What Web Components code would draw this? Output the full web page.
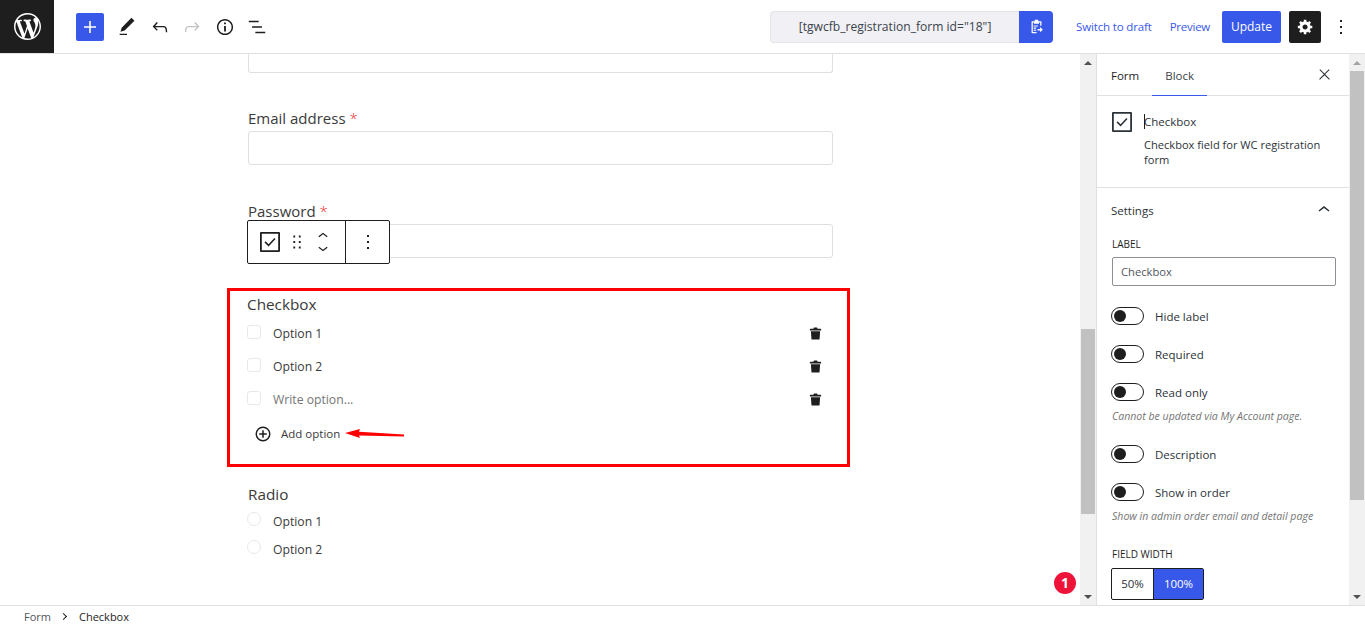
<!DOCTYPE html>
<html>
<head>
<meta charset="utf-8">
<title>Edit Form</title>
<style>
  html, body { margin: 0; height: 100%; overflow: hidden; }
  body { font-family: "Open Sans", "Noto Sans", sans-serif; color: #1e1e1e; background: #fff; }
</style>
</head>
<body>
<wp-editor></wp-editor>
<script>
const ICONS = {
  wp: ['0 0 20 20', 'M20 10c0-5.51-4.49-10-10-10C4.48 0 0 4.49 0 10c0 5.52 4.48 10 10 10 5.51 0 10-4.48 10-10zM7.78 15.37L4.37 6.22c.55-.02 1.17-.08 1.17-.08.5-.06.44-1.13-.06-1.11 0 0-1.45.11-2.37.11-.18 0-.37 0-.58-.01C4.12 2.69 6.87 1.11 10 1.11c2.33 0 4.45.87 6.05 2.34-.68-.11-1.65.39-1.65 1.58 0 .74.45 1.36.9 2.1.35.61.55 1.36.55 2.46 0 1.49-1.4 5-1.4 5l-3.03-8.37c.54-.02.82-.17.82-.17.5-.05.44-1.25-.06-1.22 0 0-1.44.12-2.38.12-.87 0-2.33-.12-2.33-.12-.5-.03-.56 1.2-.06 1.22l.92.08 1.26 3.41zM17.41 10c.24-.64.74-1.87.43-4.25.7 1.29 1.05 2.71 1.05 4.25 0 3.29-1.73 6.24-4.4 7.78.97-2.59 1.94-5.2 2.92-7.78zM6.1 18.09C3.12 16.65 1.11 13.53 1.11 10c0-1.3.23-2.48.72-3.59C3.25 10.3 4.67 14.2 6.1 18.09zm4.03-6.63l2.58 6.98c-.86.29-1.76.45-2.71.45-.79 0-1.57-.11-2.29-.33.81-2.38 1.62-4.74 2.42-7.1z'],
  plus: ['0 0 24 24', 'M18 11.2h-5.2V6h-1.6v5.2H6v1.6h5.2V18h1.6v-5.2H18z'],
  pen: ['0 0 24 24', 'M20.1 5.1L16.9 2 6.2 12.7l-1.3 4.4 4.5-1.3L20.1 5.1zM4 20.8h8v-1.5H4v1.5z'],
  undo: ['0 0 24 24', 'M18.3 11.7c-.6-.6-1.4-.9-2.3-.9H6.7l2.9-3.3-1.1-1-4.5 5L8.5 16l1-1-2.7-2.7H16c.5 0 .9.2 1.3.5 1 1 1 3.4 1 4.5v.3h1.5v-.2c0-1.5 0-4.3-1.5-5.7z'],
  redo: ['0 0 24 24', 'M15.6 6.5l-1.1 1 2.9 3.3H8c-.9 0-1.7.3-2.3.9-1.4 1.5-1.4 4.2-1.4 5.6v.2h1.5v-.3c0-1.1 0-3.5 1-4.5.3-.3.7-.5 1.3-.5h9.2L14.5 15l1.1 1.1 4.6-4.6-4.6-5z'],
  info: ['0 0 24 24', 'M12 3.2c-4.8 0-8.8 3.9-8.8 8.8 0 4.8 3.9 8.8 8.8 8.8 4.8 0 8.8-3.9 8.8-8.8 0-4.8-4-8.8-8.8-8.8zm0 16c-4 0-7.2-3.3-7.2-7.2C4.8 8 8 4.8 12 4.8s7.2 3.3 7.2 7.2c0 4-3.2 7.2-7.2 7.2zM11 17h2v-6h-2v6zm0-8h2V7h-2v2z'],
  list: ['0 0 24 24', 'M13.8 5.2H3v1.5h10.8V5.2zm-3.6 12v1.5H21v-1.5H10.2zm7.2-6H6.6v1.5h10.8v-1.5z'],
  cog: ['0 0 20 20', 'M18 12h-2.18c-.17.7-.44 1.35-.81 1.93l1.54 1.54-2.1 2.1-1.54-1.54c-.58.36-1.23.63-1.91.79V19H8v-2.18c-.68-.16-1.33-.43-1.91-.79l-1.54 1.54-2.12-2.12 1.54-1.54c-.36-.58-.63-1.23-.79-1.91H1V9.03h2.17c.16-.7.44-1.35.8-1.94L2.43 5.55l2.1-2.1 1.54 1.54c.58-.37 1.24-.64 1.93-.81V2h3v2.18c.68.16 1.33.43 1.91.79l1.54-1.54 2.12 2.12-1.54 1.54c.36.59.64 1.24.8 1.94H18V12zm-8.5 1.5c1.66 0 3-1.34 3-3s-1.34-3-3-3-3 1.34-3 3 1.34 3 3 3z'],
  more: ['0 0 24 24', 'M13 19h-2v-2h2v2zm0-6h-2v-2h2v2zm0-6h-2V5h2v2z'],
  close: ['0 0 24 24', 'M13 11.8l6.1-6.3-1-1-6.1 6.2-6.1-6.2-1 1 6.1 6.3-6.5 6.7 1 1 6.5-6.6 6.5 6.6 1-1z'],
  up: ['0 0 24 24', 'M6.5 12.4L12 8l5.5 4.4-.9 1.2L12 10l-4.5 3.6-1-1.2z'],
  down: ['0 0 24 24', 'M17.5 11.6L12 16l-5.5-4.4.9-1.2L12 14l4.5-3.6 1 1.2z'],
  drag: ['0 0 24 24', 'M8 7h2V5H8v2zm0 6h2v-2H8v2zm0 6h2v-2H8v2zm6-14v2h2V5h-2zm0 8h2v-2h-2v2zm0 6h2v-2h-2v2z'],
  trash: ['0 0 24 24', 'M9.5 2.5h5l.8 1.7H20a1 1 0 0 1 1 1V7H3V5.2a1 1 0 0 1 1-1h4.7zM4.6 8.2h14.8l-1 13.3H5.6z'],
  plusc: ['0 0 24 24', 'M12 2a10 10 0 1 0 0 20 10 10 0 0 0 0-20zm0 1.9a8.1 8.1 0 1 1 0 16.2 8.1 8.1 0 0 1 0-16.2zM11 7h2v4h4v2h-4v4h-2v-4H7v-2h4z'],
  check: ['0 0 24 24', 'M3 2h18a1 1 0 0 1 1 1v18a1 1 0 0 1-1 1H3a1 1 0 0 1-1-1V3a1 1 0 0 1 1-1zm.8 1.8v16.4h16.4V3.8zM10.6 16.4l-4.1-4 1.1-1.1 3 2.9 5.8-6.3 1.1 1z'],
  clip: ['0 0 24 24', 'M9.5 2.5h5v2H18a1 1 0 0 1 1 1V11h-1.8V6.3h-1.7V8h-7V6.3H6.8v13.4H12v1.8H6a1 1 0 0 1-1-1V5.5a1 1 0 0 1 1-1h3.5zM8 10.5h6V12H8zm0 3h3.5V15H8zm0 3h3.5V18H8zM17 12.8l4 3.7-4 3.7v-2.7h-3.6v-2H17z']
};

class WpIcon extends HTMLElement {
  connectedCallback() {
    const [box, d] = ICONS[this.getAttribute('name')];
    const size = this.getAttribute('size') || 24;
    this.attachShadow({ mode: 'open' }).innerHTML = `
      <style>:host{display:inline-flex;flex:none;width:${size}px;height:${size}px}svg{display:block;fill:currentColor}</style>
      <svg width="${size}" height="${size}" viewBox="${box}"><path fill-rule="evenodd" d="${d}"/></svg>`;
  }
}
customElements.define('wp-icon', WpIcon);

const topbarTemplate = document.createElement('template');
topbarTemplate.innerHTML = `
<style>
  :host { display: flex; align-items: center; height: 53px; border-bottom: 1px solid #e0e0e0; background: #fff; flex: none; }
  .logo { width: 54px; height: 53px; background: #1e1e1e; color: #fff; display: flex; align-items: center; justify-content: center; }
  .add { width: 28px; height: 28px; margin: 0 12px 0 22px; background: #3858e9; color: #fff; border-radius: 2px; display: flex; align-items: center; justify-content: center; }
  .tool { margin-right: 10.5px; }
  .tool.off { color: #c4c4c4; }
  .tools { display: flex; align-items: center; }
  .short { margin-left: auto; display: flex; height: 32px; width: 283px; }
  .code { flex: 1; background: #f0f0f5; border: 1px solid #e4e4e9; border-right: 0; border-radius: 4px 0 0 4px; box-sizing: border-box; font-size: 12.1px; line-height: 30px; text-align: center; color: #3c434a; white-space: nowrap; }
  .copy { width: 34px; background: #3858e9; color: #fff; border-radius: 0 4px 4px 0; display: flex; align-items: center; justify-content: center; }
  a { color: #3858e9; font-size: 11.5px; text-decoration: none; white-space: nowrap; letter-spacing: -.15px; }
  .draft { margin-left: 23px; }
  .preview { margin-left: 18px; letter-spacing: -.25px; }
  .update { margin-left: 12px; height: 32px; width: 59px; background: #3858e9; color: #fff; border-radius: 2px; font-size: 12px; font-weight: 500; line-height: 32px; text-align: center; }
  .cog { margin-left: 8px; width: 32px; height: 32px; background: #1e1e1e; color: #fff; border-radius: 2px; display: flex; align-items: center; justify-content: center; }
  .dots { margin: 0 12px 0 8px; }
</style>
<div class="logo"><wp-icon name="wp" size="27"></wp-icon></div>
<div class="add"><wp-icon name="plus"></wp-icon></div>
<div class="tools">
  <wp-icon class="tool" name="pen" size="22"></wp-icon>
  <wp-icon class="tool" name="undo" size="22"></wp-icon>
  <wp-icon class="tool off" name="redo" size="22"></wp-icon>
  <wp-icon class="tool" name="info" size="22"></wp-icon>
  <wp-icon class="tool" name="list" size="22"></wp-icon>
</div>
<div class="short">
  <div class="code">[tgwcfb_registration_form id="18"]</div>
  <div class="copy"><wp-icon name="clip" size="17"></wp-icon></div>
</div>
<a class="draft">Switch to draft</a>
<a class="preview">Preview</a>
<div class="update">Update</div>
<div class="cog"><wp-icon name="cog" size="17"></wp-icon></div>
<wp-icon class="dots" name="more"></wp-icon>
`;
class WpTopbar extends HTMLElement {
  constructor() {
    super();
    this.attachShadow({ mode: 'open' }).appendChild(topbarTemplate.content.cloneNode(true));
  }
}
customElements.define('wp-topbar', WpTopbar);

class WpScrollbar extends HTMLElement {
  connectedCallback() {
    const top = this.getAttribute('top');
    const height = this.getAttribute('thumb');
    const up = this.getAttribute('pale') !== null ? '#a3a3a3' : '#505050';
    this.attachShadow({ mode: 'open' }).innerHTML = `
      <style>
        :host { display: flex; flex-direction: column; align-items: center; background: #f1f1f1; flex: none; height: 100%; position: relative; }
        .btn { height: 17px; flex: none; display: flex; align-items: center; justify-content: center; }
        .a { width: 0; height: 0; border-left: 4px solid transparent; border-right: 4px solid transparent; }
        .u { border-bottom: 4px solid ${up}; }
        .d { border-top: 4px solid #505050; }
        .track { flex: 1; width: 100%; box-sizing: border-box; padding: 0 1px; }
        .thumb { height: ${height}px; margin-top: ${top}px; background: #c1c1c1; }
      </style>
      <div class="btn"><div class="a u"></div></div>
      <div class="track"><div class="thumb"></div></div>
      <div class="btn"><div class="a d"></div></div>`;
  }
}
customElements.define('wp-scrollbar', WpScrollbar);

const fieldTemplate = document.createElement('template');
fieldTemplate.innerHTML = `
<style>
  :host { display: block; }
  .label { font-size: 15px; line-height: 20px; color: #3a3a3a; height: 20px; margin-bottom: 3px; white-space: nowrap; }
  .req { color: #ee2a2a; font-weight: 300; }
  .input { height: 32px; border: 1px solid #dfdfe3; border-radius: 3px; background: #fff; }
</style>
<div class="label"><slot></slot> <span class="req">*</span></div>
<div class="input"></div>
`;
class WpField extends HTMLElement {
  constructor() {
    super();
    this.attachShadow({ mode: 'open' }).appendChild(fieldTemplate.content.cloneNode(true));
  }
}
customElements.define('wp-field', WpField);

class WpOption extends HTMLElement {
  connectedCallback() {
    const radio = this.hasAttribute('radio');
    const trash = this.hasAttribute('trash');
    const ph = this.hasAttribute('placeholder');
    this.attachShadow({ mode: 'open' }).innerHTML = `
      <style>
        :host { display: flex; align-items: center; font-size: 12.2px; color: ${ph ? '#757575' : '#3a3a3a'}; }
        .box { width: 12px; height: 12px; border: 1px solid #e8e8ea; border-radius: ${radio ? '50%' : '3px'}; margin: -4px 12px 0 -1px; flex: none; background: #fff; }
        .t { flex: 1; }
        wp-icon { color: #1e1e1e; margin-right: 10px; }
      </style>
      <div class="box"></div><div class="t"><slot></slot></div>
      ${trash ? '<wp-icon name="trash" size="15"></wp-icon>' : ''}`;
  }
}
customElements.define('wp-option', WpOption);

const toolbarTemplate = document.createElement('template');
toolbarTemplate.innerHTML = `
<style>
  :host { display: flex; position: absolute; left: 247px; top: 166px; width: 143px; height: 44px; box-sizing: border-box; border: 1px solid #1e1e1e; border-radius: 2px; background: #fff; z-index: 2; }
  .l { width: 98px; border-right: 1px solid #1e1e1e; display: flex; align-items: center; padding-left: 9.5px; box-sizing: border-box; }
  .mv { display: flex; flex-direction: column; margin-left: 5.5px; }
  .mv wp-icon + wp-icon { margin-top: -7.5px; }
  .r { flex: 1; display: flex; align-items: center; justify-content: center; }
</style>
<div class="l">
  <wp-icon name="check" size="24"></wp-icon>
  <wp-icon name="drag" size="22" style="margin-left:4px"></wp-icon>
  <div class="mv"><wp-icon name="up" size="20"></wp-icon><wp-icon name="down" size="20"></wp-icon></div>
</div>
<div class="r"><wp-icon name="more" size="24"></wp-icon></div>
`;
class WpBlockToolbar extends HTMLElement {
  constructor() {
    super();
    this.attachShadow({ mode: 'open' }).appendChild(toolbarTemplate.content.cloneNode(true));
  }
}
customElements.define('wp-block-toolbar', WpBlockToolbar);

const canvasTemplate = document.createElement('template');
canvasTemplate.innerHTML = `
<style>
  :host { display: block; flex: 1; position: relative; overflow: hidden; background: #fff; height: 100%; }
  .col { width: 585px; margin-left: 248px; }
  .stub { height: 19px; box-sizing: border-box; border: 1px solid #dfdfe3; border-top: 0; border-radius: 0 0 3px 3px; }
  wp-field { margin-top: 35px; }
  wp-field + wp-field { margin-top: 36px; }
  h3 { margin: 0; font-weight: 400; font-size: 15.3px; line-height: 20px; color: #3a3a3a; }
  .check { margin-top: 36px; }
  .check wp-option { height: 33px; }
  .check h3 { margin-bottom: 3px; margin-left: -1px; }
  .add { display: flex; align-items: center; height: 33px; margin: 1px 0 0 6px; font-size: 11.5px; color: #3a3a3a; }
  .add wp-icon { margin-right: 9px; color: #1e1e1e; }
  .radio { margin-top: 34px; }
  .radio h3 { margin-bottom: 3px; }
  .radio wp-option { height: 28px; }
  .mark { position: absolute; left: 227px; top: 234px; width: 623px; height: 179px; box-sizing: border-box; border: 3px solid #ff0000; pointer-events: none; }
  .arrow { position: absolute; left: 345px; top: 372px; }
  .badge { position: absolute; left: 1054px; top: 518px; width: 22px; height: 22px; border-radius: 50%; background: #ee1339; color: #fff; font: 700 14px/22px "Open Sans", sans-serif; text-align: center; }
</style>
<div class="col">
  <div class="stub"></div>
  <wp-field>Email address</wp-field>
  <wp-field>Password</wp-field>
  <div class="check">
    <h3>Checkbox</h3>
    <wp-option trash>Option 1</wp-option>
    <wp-option trash>Option 2</wp-option>
    <wp-option trash placeholder>Write option...</wp-option>
    <div class="add"><wp-icon name="plusc" size="18"></wp-icon>Add option</div>
  </div>
  <div class="radio">
    <h3>Radio</h3>
    <wp-option radio>Option 1</wp-option>
    <wp-option radio>Option 2</wp-option>
  </div>
</div>
<wp-block-toolbar></wp-block-toolbar>
<div class="mark"></div>
<svg class="arrow" width="60" height="14" viewBox="0 0 60 14"><path fill="#ff0000" d="M0 7 L15 3 L14 5.8 L59 8.6 L59 10.6 L14 9.4 L15 12 Z"/></svg>
<div class="badge">1</div>
`;
class WpCanvas extends HTMLElement {
  constructor() {
    super();
    this.attachShadow({ mode: 'open' }).appendChild(canvasTemplate.content.cloneNode(true));
  }
}
customElements.define('wp-canvas', WpCanvas);

class WpToggle extends HTMLElement {
  connectedCallback() {
    const hint = this.getAttribute('hint');
    this.attachShadow({ mode: 'open' }).innerHTML = `
      <style>
        :host { display: block; margin-bottom: 20px; }
        .row { display: flex; align-items: center; height: 18px; font-size: 11.5px; color: #2c3338; }
        .sw { width: 33px; height: 18px; box-sizing: border-box; border: 1px solid #1e1e1e; border-radius: 9px; margin-right: 11px; padding: 2px; }
        .knob { width: 12px; height: 12px; border-radius: 50%; background: #1e1e1e; }
        .hint { font-size: 10.55px; font-style: italic; line-height: 14px; color: #757575; margin: 8px 0 0 1px; white-space: nowrap; }
      </style>
      <div class="row"><div class="sw"><div class="knob"></div></div><slot></slot></div>
      ${hint ? `<div class="hint">${hint}</div>` : ''}`;
  }
}
customElements.define('wp-toggle', WpToggle);

const sidebarTemplate = document.createElement('template');
sidebarTemplate.innerHTML = `
<style>
  :host { display: block; width: 252px; flex: none; background: #fff; overflow: hidden; height: 100%; font-size: 11.5px; color: #2c3338; }
  .tabs { display: flex; align-items: center; height: 41px; border-bottom: 1px solid #e0e0e0; position: relative; padding-left: 14px; }
  .tab { font-size: 11.5px; line-height: 43px; height: 41px; font-weight: 500; color: #1e1e1e; }
  .tab.on { margin-left: 13px; padding: 0 13px; box-shadow: inset 0 -1px 0 #3858e9; color: #3c434a; height: 42px; }
  .x { margin-left: auto; margin-right: 16.5px; }
  .card { display: flex; height: 92px; box-sizing: border-box; border-bottom: 1px solid #e0e0e0; padding: 14px 0 0 13px; }
  .card-t { margin: 2px 0 0 10px; }
  .card-t b { font-weight: 500; display: block; line-height: 20px; border-left: 0; position: relative; }
  .caret { position: absolute; left: 0; top: 2px; width: 1px; height: 15px; background: #1e1e1e; }
  .card-t p { margin: 5px 0 0; line-height: 15px; font-size: 11.1px; width: 185px; }
  .panel { padding: 12px 13px 0 14px; }
  .head { display: flex; align-items: center; justify-content: space-between; height: 20px; font-weight: 500; margin-bottom: 17px; }
  .cap { font-size: 10px; font-weight: 500; line-height: 14px; color: #1e1e1e; text-transform: uppercase; margin: 0 0 6px 1px; }
  .inp { height: 29px; box-sizing: border-box; border: 1px solid #8c8f94; border-radius: 2px; padding-left: 8px; line-height: 27px; margin: 0 0 21px 1px; color: #50575e; font-size: 11.2px; }
  .seg { display: flex; width: 93px; height: 32px; box-sizing: border-box; border: 1px solid #1e1e1e; border-radius: 2px; }
  .seg div { flex: 1; text-align: center; line-height: 30px; }
  .seg .on { width: 49px; flex: none; background: #3858e9; color: #fff; border-left: 1px solid #1e1e1e; }
  .hinted { margin-bottom: 22px; }
  .cap2 { margin-top: 24px; margin-bottom: 7px; }
</style>
<div class="tabs">
  <div class="tab">Form</div>
  <div class="tab on">Block</div>
  <wp-icon class="x" name="close" size="17"></wp-icon>
</div>
<div class="card">
  <wp-icon name="check" size="24"></wp-icon>
  <div class="card-t">
    <b><span class="caret"></span>Checkbox</b>
    <p>Checkbox field for WC registration form</p>
  </div>
</div>
<div class="panel">
  <div class="head">Settings <wp-icon name="up" size="24"></wp-icon></div>
  <div class="cap">Label</div>
  <div class="inp">Checkbox</div>
  <wp-toggle>Hide label</wp-toggle>
  <wp-toggle>Required</wp-toggle>
  <wp-toggle hint="Cannot be updated via My Account page." class="hinted">Read only</wp-toggle>
  <wp-toggle>Description</wp-toggle>
  <wp-toggle hint="Show in admin order email and detail page">Show in order</wp-toggle>
  <div class="cap cap2">Field width</div>
  <div class="seg"><div>50%</div><div class="on">100%</div></div>
</div>
`;
class WpSidebar extends HTMLElement {
  constructor() {
    super();
    this.attachShadow({ mode: 'open' }).appendChild(sidebarTemplate.content.cloneNode(true));
  }
}
customElements.define('wp-sidebar', WpSidebar);

const footerTemplate = document.createElement('template');
footerTemplate.innerHTML = `
<style>
  :host { display: flex; align-items: center; height: 21px; flex: none; border-top: 1px solid #e0e0e0; padding-left: 24px; font-size: 11px; color: #50575e; background: #fff; }
  .sep { width: 4px; height: 4px; border-top: 1.5px solid #1e1e1e; border-right: 1.5px solid #1e1e1e; transform: rotate(45deg); margin: 0 13px 0 10px; }
  .cur { color: #1e1e1e; }
</style>
<span>Form</span><span class="sep"></span><span class="cur">Checkbox</span>
`;
class WpFooter extends HTMLElement {
  constructor() {
    super();
    this.attachShadow({ mode: 'open' }).appendChild(footerTemplate.content.cloneNode(true));
  }
}
customElements.define('wp-footer', WpFooter);

const editorTemplate = document.createElement('template');
editorTemplate.innerHTML = `
<style>
  :host { display: flex; flex-direction: column; height: 627px; width: 1365px; overflow: hidden; }
  .main { flex: 1; display: flex; min-height: 0; }
  .s1 { width: 16px; border-right: 1px solid #e0e0e0; }
  .s2 { width: 16px; }
</style>
<wp-topbar></wp-topbar>
<div class="main">
  <wp-canvas></wp-canvas>
  <wp-scrollbar class="s1" top="258" thumb="185"></wp-scrollbar>
  <wp-sidebar></wp-sidebar>
  <wp-scrollbar class="s2" top="0" thumb="429" pale></wp-scrollbar>
</div>
<wp-footer></wp-footer>
`;
class WpEditor extends HTMLElement {
  constructor() {
    super();
    this.attachShadow({ mode: 'open' }).appendChild(editorTemplate.content.cloneNode(true));
  }
}
customElements.define('wp-editor', WpEditor);
</script>
</body>
</html>
